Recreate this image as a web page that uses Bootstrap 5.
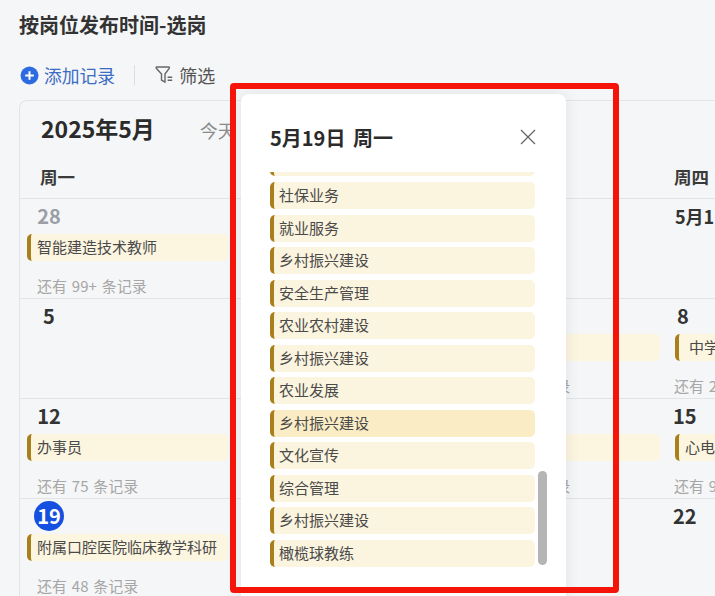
<!DOCTYPE html>
<html lang="zh">
<head>
<meta charset="utf-8">
<title>按岗位发布时间-选岗</title>
<link href="https://cdn.jsdelivr.net/npm/bootstrap@5.3.0/dist/css/bootstrap.min.css" rel="stylesheet">
<style>
html,body{height:596px;overflow:hidden}
body{background:#f5f6f7;font-family:"Noto Sans CJK SC","Liberation Sans",sans-serif;color:#333;position:relative}
.pg-title{font-size:20px;font-weight:700;line-height:28px;color:#333;padding:11px 0 0 19px;margin:0}
.tools{height:40px;margin-top:16px;padding-left:20px}
.add-link{font-size:17.8px;color:#3a6cc4;text-decoration:none;gap:5px}
.sep{width:1px;height:20px;background:#dcdde0;margin:0 20px 0 19px}
.filter-txt{font-size:18px;color:#555;margin-left:6px}
.cal{margin:5px 0 0 19px;width:900px;background:#f5f6f7;border:1px solid #e3e4e6;border-right:0;border-bottom:0;border-radius:8px 0 0 0;display:block}
.cal-head{height:97px}
.month{font-size:23px;font-weight:700;line-height:32px;color:#2b2b2b;padding:11px 0 0 21px;height:48px}
.today{font-size:18px;color:#8a8a8a;margin-left:45px;font-weight:400}
.wk-row,.wk-labels{display:grid;grid-template-columns:repeat(4,216px)}
.wk-labels{height:36px;margin-top:10px;line-height:36px;font-size:17.5px;font-weight:600;color:#3a3a3a}
.wk-labels span{padding-left:20px}
.wk-labels span:last-child{padding-left:6px}
.wk-row{height:100px;border-top:1px solid #e3e4e6}
.cell{padding:2px 8px 0 7px;height:99px;overflow:hidden}
.day{display:block;width:30px;height:30px;line-height:30px;margin-left:7px;text-align:center;font-size:20px;font-weight:700;color:#333;white-space:nowrap}
.day-muted{color:#9a9ea6}
.day-now{background:#1650e0;color:#fff;border-radius:50%}
.cell-r .day{width:20px;margin-left:-2px}
.cell-r .day-long{width:auto;margin-left:0;text-align:left;font-size:18px}
.evt{height:27px;line-height:26px;font-size:15px;color:#4a4a4a;background:#fcf5e0;border-left:4px solid #a97f1c;border-radius:5px;padding-left:6px;white-space:nowrap;overflow:hidden}
.evt-top{margin-top:3px}
.evt-inset{padding-left:10px}
.more{margin:15px 0 0 10px;line-height:20px;font-size:15px;color:#a6a6a6;white-space:nowrap;word-spacing:1.5px}
.cell-r .more{margin-left:-1px}
.sheet{left:241px;top:94px;width:325px;height:530px;background:#fff;border:0;border-radius:8px;box-shadow:0 0 16px rgba(0,0,0,.09);padding:0 31px 0 29px}
.sheet-head{height:78px;padding-top:9px}
.sheet-title{font-size:20px;font-weight:700;color:#2b2b2b;margin:0;line-height:38px;word-spacing:3px}
.x-btn{width:16px;height:16px;padding:0;border:0;background:none;line-height:0;margin:-2px -1px 0 0}
.rec-list{height:395px;gap:5.55px;overflow:hidden}
.rec-list .evt{flex:0 0 27px;background:#fbf4df;padding-left:5px}
.rec-list .evt-hot{background:#faedc5}
.thumb{left:538px;top:471px;width:9px;height:94px;border-radius:5px;background:#b5b5b5}
.mark-box{left:230px;top:83px;width:389px;height:510px;border:6px solid #f5140a;border-radius:4px;pointer-events:none}
</style>
</head>
<body>
<h1 class="pg-title">按岗位发布时间-选岗</h1>
<div class="tools d-flex align-items-center">
  <a class="add-link d-flex align-items-center" href="#">
    <svg width="19" height="19" viewBox="0 0 19 19"><circle cx="9.5" cy="9.5" r="9" fill="#2f6be0"/><path d="M9.5 5.2v8.6M5.2 9.5h8.6" stroke="#fff" stroke-width="2"/></svg>
    <span>添加记录</span>
  </a>
  <span class="sep"></span>
  <svg width="18" height="18" viewBox="0 0 18 18" fill="none" stroke="#666" stroke-width="1.4"><path d="M2 1h11.5q1.5 0 .7 1.3L10 8v8.2L6.5 14.2V8L1.3 2.3Q.6 1 2 1z" stroke-linejoin="round"/><path d="M12.6 11.2h4.6M12.6 14.2h4.6"/></svg>
  <span class="filter-txt">筛选</span>
</div>

<div class="card cal">
  <div class="cal-head">
    <div class="month">2025年5月<span class="today">今天</span></div>
    <div class="wk-labels"><span>周一</span><span>周二</span><span>周三</span><span>周四</span></div>
  </div>
  <div class="wk-row">
    <div class="cell"><span class="day day-muted">28</span><div class="evt evt-top">智能建造技术教师</div><div class="more">还有 99+ 条记录</div></div>
    <div class="cell"></div>
    <div class="cell"></div>
    <div class="cell cell-r"><span class="day day-long">5月1日</span></div>
  </div>
  <div class="wk-row">
    <div class="cell"><span class="day">5</span></div>
    <div class="cell"></div>
    <div class="cell"><span class="day"></span><div class="evt evt-top"></div><div class="more">还有 75 条记录</div></div>
    <div class="cell cell-r"><span class="day">8</span><div class="evt evt-top evt-inset">中学教师</div><div class="more">还有 20 条记录</div></div>
  </div>
  <div class="wk-row">
    <div class="cell"><span class="day">12</span><div class="evt evt-top">办事员</div><div class="more">还有 75 条记录</div></div>
    <div class="cell"></div>
    <div class="cell"><span class="day"></span><div class="evt evt-top"></div><div class="more">还有 75 条记录</div></div>
    <div class="cell cell-r"><span class="day">15</span><div class="evt evt-top">心电图医师</div><div class="more">还有 90 条记录</div></div>
  </div>
  <div class="wk-row">
    <div class="cell"><span class="day day-now">19</span><div class="evt evt-top">附属口腔医院临床教学科研</div><div class="more">还有 48 条记录</div></div>
    <div class="cell"></div>
    <div class="cell"></div>
    <div class="cell cell-r"><span class="day">22</span></div>
  </div>
</div>

<div class="card sheet position-absolute">
  <div class="sheet-head d-flex justify-content-between align-items-center">
    <h2 class="sheet-title">5月19日 周一</h2>
    <button class="x-btn" type="button" aria-label="关闭"><svg width="16" height="16" viewBox="0 0 16 16" stroke="#666" stroke-width="1.3"><path d="M1 1l14 14M15 1L1 15"/></svg></button>
  </div>
  <div class="rec-list d-flex flex-column justify-content-end">
    <div class="evt"></div>
    <div class="evt">社保业务</div>
    <div class="evt">就业服务</div>
    <div class="evt">乡村振兴建设</div>
    <div class="evt">安全生产管理</div>
    <div class="evt">农业农村建设</div>
    <div class="evt">乡村振兴建设</div>
    <div class="evt">农业发展</div>
    <div class="evt evt-hot">乡村振兴建设</div>
    <div class="evt">文化宣传</div>
    <div class="evt">综合管理</div>
    <div class="evt">乡村振兴建设</div>
    <div class="evt">橄榄球教练</div>
  </div>
</div>
<div class="thumb position-absolute"></div>
<div class="mark-box position-absolute"></div>
<script src="https://cdn.jsdelivr.net/npm/bootstrap@5.3.0/dist/js/bootstrap.bundle.min.js"></script>
</body>
</html>
